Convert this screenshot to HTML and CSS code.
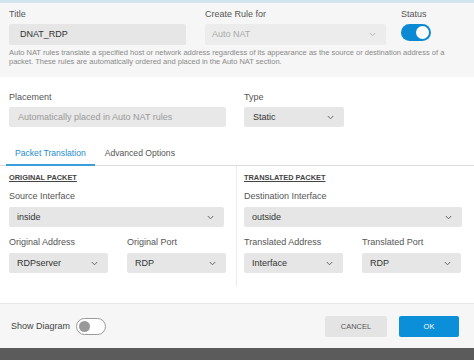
FILE: index.html
```html
<!DOCTYPE html>
<html lang="en">
<head>
    <meta charset="UTF-8">
    <title>Add NAT Rule</title>
    <link rel="stylesheet" href="styles.css">
</head>
<body>
    <div class="topline"></div>

    <!-- General settings -->
    <div class="general">
        <div class="general-row">
            <div class="field">
                <div class="label">Title</div>
                <div class="input">DNAT_RDP</div>
            </div>
            <div class="field">
                <div class="label">Create Rule for</div>
                <div class="select disabled">Auto NAT
                    <svg class="chev" width="7" height="5" viewBox="0 0 7 5"><polyline points="0.8,1 3.5,3.8 6.2,1" fill="none" stroke="#b5b5b5" stroke-width="1"/></svg>
                </div>
            </div>
            <div class="field">
                <div class="label">Status</div>
                <div class="toggle on"><span class="knob"></span></div>
            </div>
        </div>
        <p class="note">Auto NAT rules translate a specified host or network address regardless of its appearance as the source or destination address of a packet. These rules are automatically ordered and placed in the Auto NAT section.</p>
    </div>

    <div class="placement-row">
        <div class="field">
            <div class="label">Placement</div>
            <div class="input muted">Automatically placed in Auto NAT rules</div>
        </div>
        <div class="field">
            <div class="label">Type</div>
            <div class="select">Static
                <svg class="chev" width="7" height="5" viewBox="0 0 7 5"><polyline points="0.8,1 3.5,3.8 6.2,1" fill="none" stroke="#666" stroke-width="1"/></svg>
            </div>
        </div>
    </div>

    <!-- Tabs -->
    <div class="tabs">
        <div class="tab active">Packet Translation</div>
        <div class="tab">Advanced Options</div>
    </div>

    <div class="packets">
        <div class="packet">
            <div class="packet-title">ORIGINAL PACKET</div>
            <div class="field">
                <div class="label">Source Interface</div>
                <div class="select">inside
                    <svg class="chev" width="7" height="5" viewBox="0 0 7 5"><polyline points="0.8,1 3.5,3.8 6.2,1" fill="none" stroke="#666" stroke-width="1"/></svg>
                </div>
            </div>
            <div class="pair">
                <div class="field">
                    <div class="label">Original Address</div>
                    <div class="select">RDPserver
                        <svg class="chev" width="7" height="5" viewBox="0 0 7 5"><polyline points="0.8,1 3.5,3.8 6.2,1" fill="none" stroke="#666" stroke-width="1"/></svg>
                    </div>
                </div>
                <div class="field">
                    <div class="label">Original Port</div>
                    <div class="select">RDP
                        <svg class="chev" width="7" height="5" viewBox="0 0 7 5"><polyline points="0.8,1 3.5,3.8 6.2,1" fill="none" stroke="#666" stroke-width="1"/></svg>
                    </div>
                </div>
            </div>
        </div>
        <div class="packet right">
            <div class="packet-title">TRANSLATED PACKET</div>
            <div class="field">
                <div class="label">Destination Interface</div>
                <div class="select">outside
                    <svg class="chev" width="7" height="5" viewBox="0 0 7 5"><polyline points="0.8,1 3.5,3.8 6.2,1" fill="none" stroke="#666" stroke-width="1"/></svg>
                </div>
            </div>
            <div class="pair">
                <div class="field">
                    <div class="label">Translated Address</div>
                    <div class="select">Interface
                        <svg class="chev" width="7" height="5" viewBox="0 0 7 5"><polyline points="0.8,1 3.5,3.8 6.2,1" fill="none" stroke="#666" stroke-width="1"/></svg>
                    </div>
                </div>
                <div class="field">
                    <div class="label">Translated Port</div>
                    <div class="select">RDP
                        <svg class="chev" width="7" height="5" viewBox="0 0 7 5"><polyline points="0.8,1 3.5,3.8 6.2,1" fill="none" stroke="#666" stroke-width="1"/></svg>
                    </div>
                </div>
            </div>
        </div>
    </div>

    <!-- Footer -->
    <div class="footer">
        <div class="diagram">
            <span>Show Diagram</span>
            <div class="toggle off"><span class="knob"></span></div>
        </div>
        <div class="buttons">
            <button class="btn cancel">CANCEL</button>
            <button class="btn ok">OK</button>
        </div>
    </div>
    <div class="darkbar"></div>
</body>
</html>
```

FILE: styles.css
```css
/* Page */
html, body {
    margin: 0;
    height: 100%;
    overflow: hidden;
    background-color: white;
    font-family: "Liberation Sans", Arial, sans-serif;
    font-size: 9px;
    color: #444;
}

.topline {
    height: 3px;
    background-color: #d2e5ef;
}

/* General settings panel */
.general {
    background-color: #f6f6f6;
    padding: 6px 9px 0 9px;
    height: 68px;
}

.general-row {
    display: grid;
    grid-template-columns: 177px 181px 40px;
    column-gap: 19px;
}

.general-row .field:nth-child(3) {
    margin-left: -4px;
}

.label {
    height: 11px;
    line-height: 11px;
    margin-bottom: 4px;
    color: #555;
    font-size: 9px;
}

.input, .select {
    box-sizing: border-box;
    height: 21px;
    line-height: 21px;
    padding-left: 11px;
    background-color: #e6e6e6;
    border-radius: 2px;
    color: #333;
    font-size: 9px;
    position: relative;
}

.select .chev {
    position: absolute;
    right: 10px;
    top: 8px;
}

.select.disabled {
    background-color: #ececec;
    color: #aaa;
    padding-left: 7px;
}

.input.muted {
    color: #999;
    background-color: #e8e8e8;
    padding-left: 9px;
}

.note {
    margin: 4px 0 0 0;
    font-size: 7.5px;
    line-height: 8.5px;
    color: #8a8a8a;
    width: 445px;
}

/* Toggle switch */
.toggle {
    box-sizing: border-box;
    width: 30px;
    height: 17px;
    border-radius: 9px;
    position: relative;
}

.toggle.on {
    background-color: #0b8ad3;
}

.toggle.on .knob {
    position: absolute;
    right: 2px;
    top: 2px;
    width: 13px;
    height: 13px;
    border-radius: 50%;
    background-color: white;
}

.toggle.off {
    border: 1px solid #999;
    background-color: white;
}

.toggle.off .knob {
    position: absolute;
    left: 2px;
    top: 2px;
    width: 11px;
    height: 11px;
    border-radius: 50%;
    background-color: #999;
}

/* Placement row */
.placement-row {
    display: grid;
    grid-template-columns: 217px 100px;
    column-gap: 18px;
    padding: 15px 9px 0 9px;
}

.placement-row .input,
.placement-row .select {
    height: 20px;
    line-height: 20px;
}

.placement-row .select {
    padding-left: 9px;
}

/* Tabs */
.tabs {
    display: flex;
    margin-top: 17px;
    padding-left: 6px;
    border-bottom: 1px solid #dcdcdc;
}

.tab {
    padding: 4px 10px 6px 10px;
    color: #555;
    font-size: 8.6px;
    line-height: 10px;
    white-space: nowrap;
}

.tab.active {
    color: #1e8ccc;
    border-bottom: 2px solid #3a9fd8;
    margin-bottom: -1px;
    padding-left: 9px;
    padding-right: 9px;
}

/* Packet columns */
.packets {
    display: grid;
    grid-template-columns: 237px 237px;
    height: 126px;
}

.packet {
    padding: 6px 12px 0 9px;
    border-right: 1px solid #ececec;
    margin-bottom: 6px;
}

.packet.right {
    border-right: none;
    padding-left: 7px;
}

.packet-title {
    font-size: 7.4px;
    font-weight: bold;
    text-decoration: underline;
    color: #444;
    height: 11px;
    line-height: 11px;
    margin-bottom: 8px;
}

.packet .label {
    margin-bottom: 5px;
}

.packet .select {
    height: 20px;
    line-height: 20px;
    padding-left: 8px;
}

.pair {
    display: grid;
    grid-template-columns: 99px 99px;
    column-gap: 19px;
    margin-top: 10px;
}

/* Footer */
.footer {
    display: flex;
    justify-content: space-between;
    align-items: center;
    height: 44px;
    margin-top: 11px;
    border-top: 1px solid #e6e6e6;
    background-color: #f6f6f6;
    padding: 0 15px 0 11px;
}

.diagram {
    display: flex;
    align-items: center;
    gap: 6px;
    color: #444;
    font-size: 9px;
}

.buttons {
    display: flex;
    gap: 12px;
}

.btn {
    height: 21px;
    border: none;
    border-radius: 2px;
    font-family: "Liberation Sans", Arial, sans-serif;
    font-size: 7.5px;
    cursor: pointer;
}

.btn.cancel {
    width: 62px;
    background-color: #e4e4e4;
    color: #555;
}

.btn.ok {
    width: 60px;
    background-color: #0a8fd8;
    color: white;
}

.darkbar {
    height: 12px;
    background-color: #5b5b5b;
}
```
